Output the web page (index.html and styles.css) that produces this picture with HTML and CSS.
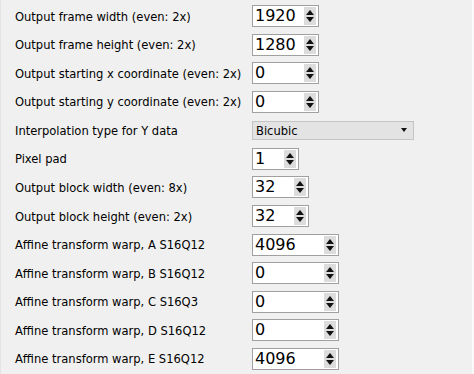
FILE: index.html
```html
<!DOCTYPE html>
<html lang="en">
<head>
    <meta charset="UTF-8">
    <title>Warp settings</title>
    <link rel="stylesheet" href="styles.css">
</head>
<body>
    <div class="panel">
        <label>Output frame width (even: 2x)</label>
        <div class="spin w67"><span class="val">1920</span><span class="arrows"><i class="up"></i><i class="down"></i></span></div>

        <label>Output frame height (even: 2x)</label>
        <div class="spin w67"><span class="val">1280</span><span class="arrows"><i class="up"></i><i class="down"></i></span></div>

        <label>Output starting x coordinate (even: 2x)</label>
        <div class="spin w67"><span class="val">0</span><span class="arrows"><i class="up"></i><i class="down"></i></span></div>

        <label>Output starting y coordinate (even: 2x)</label>
        <div class="spin w67"><span class="val">0</span><span class="arrows"><i class="up"></i><i class="down"></i></span></div>

        <label>Interpolation type for Y data</label>
        <div class="combo"><span>Bicubic</span><i class="drop"></i></div>

        <label>Pixel pad</label>
        <div class="spin w47"><span class="val">1</span><span class="arrows"><i class="up"></i><i class="down"></i></span></div>

        <label>Output block width (even: 8x)</label>
        <div class="spin w57"><span class="val">32</span><span class="arrows"><i class="up"></i><i class="down"></i></span></div>

        <label>Output block height (even: 2x)</label>
        <div class="spin w57"><span class="val">32</span><span class="arrows"><i class="up"></i><i class="down"></i></span></div>

        <label>Affine transform warp, A S16Q12</label>
        <div class="spin w87"><span class="val">4096</span><span class="arrows"><i class="up"></i><i class="down"></i></span></div>

        <label>Affine transform warp, B S16Q12</label>
        <div class="spin w87"><span class="val">0</span><span class="arrows"><i class="up"></i><i class="down"></i></span></div>

        <label>Affine transform warp, C S16Q3</label>
        <div class="spin w87"><span class="val">0</span><span class="arrows"><i class="up"></i><i class="down"></i></span></div>

        <label>Affine transform warp, D S16Q12</label>
        <div class="spin w87"><span class="val">0</span><span class="arrows"><i class="up"></i><i class="down"></i></span></div>

        <label>Affine transform warp, E S16Q12</label>
        <div class="spin w87"><span class="val">4096</span><span class="arrows"><i class="up"></i><i class="down"></i></span></div>
    </div>
</body>
</html>
```

FILE: styles.css
```css
html, body {
    margin: 0;
    padding: 0;
    background-color: #f0f0f0;
}

body {
    width: 474px;
    height: 374px;
    overflow: hidden;
    font-family: "DejaVu Sans Condensed", "DejaVu Sans", sans-serif;
    font-size: 12.8px;
    color: #000;
}

.panel {
    display: grid;
    grid-template-columns: 237px auto;
    grid-auto-rows: 22px;
    row-gap: 6.58px;
    align-items: center;
    justify-items: start;
    padding: 5px 0 0 14px;
    height: 100%;
    box-sizing: border-box;
    border-left: 1px solid #e4e4e4;
    border-right: 2px solid #fafafa;
}

label {
    white-space: nowrap;
}

.spin {
    display: flex;
    height: 22px;
    box-sizing: border-box;
    border: 1px solid #a0a0a0;
    background-color: #fff;
}

.w47 { width: 47px; }
.w57 { width: 57px; }
.w67 { width: 67px; }
.w87 { width: 87px; }

.val {
    flex: 1;
    font-family: "DejaVu Sans", Verdana, sans-serif;
    font-size: 16px;
    line-height: 20px;
    padding-left: 2px;
}

.arrows {
    display: flex;
    flex-direction: column;
    justify-content: center;
    align-items: center;
    gap: 2px;
    width: 12px;
    margin: 1px 2px 1px 0;
    background-color: #dcdcdc;
}

.up {
    width: 0;
    height: 0;
    border-left: 4px solid transparent;
    border-right: 4px solid transparent;
    border-bottom: 5px solid #111;
}

.down {
    width: 0;
    height: 0;
    border-left: 4px solid transparent;
    border-right: 4px solid transparent;
    border-top: 5px solid #111;
}

.combo {
    display: flex;
    align-items: center;
    justify-content: space-between;
    width: 162px;
    height: 19px;
    box-sizing: border-box;
    border: 1px solid #c4c4c4;
    background-color: #e3e3e3;
    padding: 0 6px 0 3px;
}

.drop {
    width: 0;
    height: 0;
    border-left: 3px solid transparent;
    border-right: 3px solid transparent;
    border-top: 4px solid #111;
}
```
